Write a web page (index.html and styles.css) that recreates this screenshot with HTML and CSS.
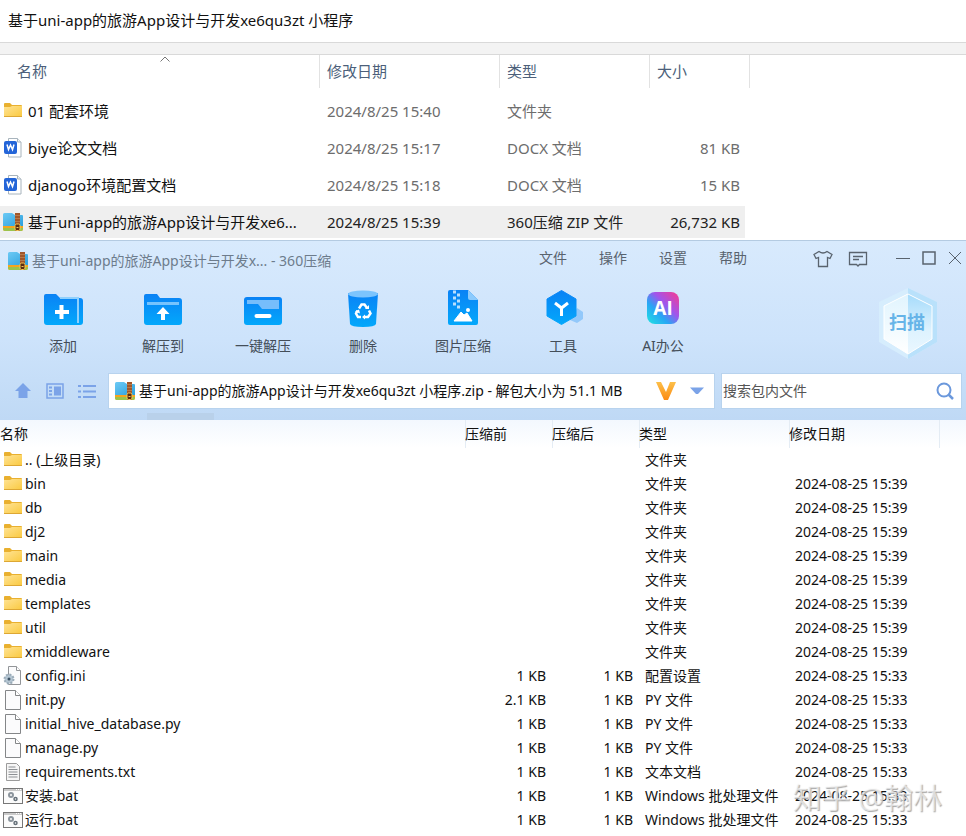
FILE: index.html
```
<!DOCTYPE html>
<html lang="zh-CN">
<head>
  <meta charset="UTF-8">
  <meta name="viewport" content="width=device-width, initial-scale=1">
  <title>360压缩</title>
  <link rel="stylesheet" href="styles.css">
</head>
<body>

  <!-- SHARED ICONS -->
  <svg class="defs" width="0" height="0" aria-hidden="true">
    <defs>
      <linearGradient id="gFolder" x1="0" y1="0" x2="1" y2="1">
        <stop offset="0" stop-color="#ffe394"/><stop offset="1" stop-color="#fac93f"/>
      </linearGradient>
      <linearGradient id="gBlue" x1="0" y1="0" x2="0" y2="1">
        <stop offset="0" stop-color="#0a82f5"/><stop offset="1" stop-color="#03a8fb"/>
      </linearGradient>
      <linearGradient id="gZip" x1="0" y1="0" x2="1" y2="1">
        <stop offset="0" stop-color="#6dcaf5"/><stop offset="1" stop-color="#2b9fdc"/>
      </linearGradient>
      <linearGradient id="gV" x1="0" y1="0" x2="0" y2="1">
        <stop offset="0" stop-color="#fdc04a"/><stop offset="1" stop-color="#fb8a12"/>
      </linearGradient>
      <linearGradient id="gAi" x1="0" y1="1" x2="1" y2="0">
        <stop offset="0" stop-color="#20e5e0"/><stop offset=".35" stop-color="#29a5f5"/>
        <stop offset=".6" stop-color="#a055ec"/><stop offset="1" stop-color="#fb3a8c"/>
      </linearGradient>
      <linearGradient id="gHexL" x1="0" y1="0" x2="0" y2="1">
        <stop offset="0" stop-color="#e0f4fe"/><stop offset="1" stop-color="#ffffff"/>
      </linearGradient>
      <linearGradient id="gHexR" x1="0" y1="0" x2="0" y2="1">
        <stop offset="0" stop-color="#a5dbfb"/><stop offset=".6" stop-color="#ddf2fe"/><stop offset="1" stop-color="#eaf7ff"/>
      </linearGradient>
    </defs>
    <symbol id="folder" viewBox="0 0 20 18">
      <path d="M1 2q0-1 1-1h5l2 2h9q1 0 1 1v3H1z" fill="#e9b02f"/>
      <path d="M1 5h6l2-1h10v10q0 1-1 1H2q-1 0-1-1z" fill="url(#gFolder)"/>
      <path d="M1 14.500h18" stroke="#dda734"/>
    </symbol>
    <symbol id="docx" viewBox="0 0 20 20">
      <path d="M5.500.5h9l3.500 3.500v15H5.500z" fill="#fff" stroke="#a8b4bd"/>
      <path d="M14.500.5v3.500H18" fill="#eef2f5" stroke="#a8b4bd"/>
      <rect x="1" y="3" width="13" height="13" rx="2" fill="#2465d8"/>
      <path d="M4 6.500l1.500 5L7.500 7l2 4.500 1.500-5" fill="none" stroke="#fff" stroke-width="1.500"/>
    </symbol>
    <symbol id="zip" viewBox="0 0 20 20">
      <path d="M0 2.500Q0 1 1.500 1H9l3 2h7q1 0 1 1v10H0z" fill="url(#gZip)"/>
      <path d="M0 14h20v3q0 2-2 2H2q-2 0-2-2z" fill="#f4a51e"/>
      <path d="M0 16h20v1q0 2-2 2H2q-2 0-2-2z" fill="#9cc34b"/>
      <rect x="12" y="1" width="5" height="18" fill="#a0562a"/>
      <path d="M12 3.500h5M12 6.500h5M12 9.500h5" stroke="#b87a4a"/>
      <rect x="12" y="12" width="5" height="6.500" rx="1.500" fill="#5d2c10" stroke="#f6cb55"/>
      <path d="M13.500 15.500h2" stroke="#f6cb55"/>
    </symbol>
    <symbol id="file" viewBox="0 0 20 20">
      <path d="M2.500.5h10l5 5v14h-15z" fill="#fbfbfc" stroke="#848688"/>
      <path d="M12.500.5v5h5" fill="#fff" stroke="#848688"/>
    </symbol>
    <symbol id="text" viewBox="0 0 20 20">
      <path d="M3.500 1.500h10l3 3v14h-13z" fill="#f6f6f6" stroke="#9b9b9b"/>
      <path d="M5.500 5h7M5.500 7.500h9M5.500 10h9M5.500 12.500h9M5.500 15h9" stroke="#8d9094"/>
    </symbol>
    <symbol id="ini" viewBox="0 0 20 20">
      <path d="M5.500.5h8l4 4v14h-12z" fill="#fbfbfc" stroke="#929598"/>
      <path d="M13.500.5v4h4" fill="#fff" stroke="#929598"/>
      <circle cx="6" cy="13" r="4.500" fill="#b4c5d2" stroke="#9aabb8" stroke-width="2" stroke-dasharray="2 1.500"/>
      <circle cx="6" cy="13" r="1.500" fill="#405566"/>
    </symbol>
    <symbol id="bat" viewBox="0 0 20 18">
      <rect x=".5" y="1.500" width="19" height="15" fill="#fbfbfb" stroke="#777"/>
      <path d="M1 3h18" stroke="#999"/>
      <path d="M13 2.500h1M15 2.500h1M17 2.500h1" stroke="#fff"/>
      <circle cx="8" cy="8" r="2" fill="none" stroke="#8c959d" stroke-width="2"/>
      <circle cx="12.500" cy="12" r="1.500" fill="none" stroke="#66717a" stroke-width="1.500"/>
    </symbol>
  </svg>

  <!-- EXPLORER -->
  <header class="path">基于uni-app的旅游App设计与开发xe6qu3zt 小程序</header>
  <div class="strip"></div>
  <table class="explorer">
    <colgroup><col class="c-name"><col class="c-date"><col class="c-type"><col class="c-size"><col></colgroup>
    <thead>
      <tr>
        <th>名称<svg class="sort" viewBox="0 0 10 6"><path d="M.5 5.500L5 1l4.500 4.500" fill="none" stroke="#777"/></svg></th>
        <th>修改日期</th><th>类型</th><th>大小</th><td></td>
      </tr>
    </thead>
    <tbody>
      <tr><td><div class="name"><svg><use href="#folder"/></svg><span>01 配套环境</span></div></td><td>2024/8/25 15:40</td><td>文件夹</td><td></td><td></td></tr>
      <tr><td><div class="name"><svg><use href="#docx"/></svg><span>biye论文文档</span></div></td><td>2024/8/25 15:17</td><td>DOCX 文档</td><td>81 KB</td><td></td></tr>
      <tr><td><div class="name"><svg><use href="#docx"/></svg><span>djanogo环境配置文档</span></div></td><td>2024/8/25 15:18</td><td>DOCX 文档</td><td>15 KB</td><td></td></tr>
      <tr class="selected"><td><div class="name"><svg><use href="#zip"/></svg><span>基于uni-app的旅游App设计与开发xe6...</span></div></td><td>2024/8/25 15:39</td><td>360压缩 ZIP 文件</td><td>26,732 KB</td><td></td></tr>
    </tbody>
  </table>

  <!-- ARCHIVER WINDOW -->
  <main class="archiver">
    <div class="chrome">
      <div class="titlebar">
        <svg class="app-icon"><use href="#zip"/></svg>
        <h1>基于uni-app的旅游App设计与开发x... - 360压缩</h1>
        <nav class="menu">
          <button type="button">文件</button>
          <button type="button">操作</button>
          <button type="button">设置</button>
          <button type="button">帮助</button>
        </nav>
        <div class="window-tools">
          <button type="button" aria-label="皮肤"><svg width="20" height="18" viewBox="0 0 20 18"><path d="M6 1.500q4 3 8 0l5 3-2 4-2.500-1v9h-9v-9L3 8.500l-2-4z" fill="none" stroke="#59636e" stroke-width="1.300"/></svg></button>
          <button type="button" aria-label="反馈"><svg width="20" height="18" viewBox="0 0 20 18"><path d="M1.500 2.500h17v12h-7L10 16l-1.500-1.500h-7zM5 6.500h10M5 9.500h6" fill="none" stroke="#59636e" stroke-width="1.300"/></svg></button>
        </div>
        <div class="window-buttons">
          <button type="button" aria-label="最小化"><svg width="14" height="14" viewBox="0 0 14 14"><path d="M0 7.500h14" stroke="#59636e"/></svg></button>
          <button type="button" aria-label="最大化"><svg width="14" height="14" viewBox="0 0 14 14"><rect x="1" y="1" width="12" height="12" fill="none" stroke="#59636e" stroke-width="1.500"/></svg></button>
          <button type="button" aria-label="关闭"><svg width="14" height="14" viewBox="0 0 14 14"><path d="M1 1l12 12M13 1L1 13" stroke="#59636e"/></svg></button>
        </div>
      </div>

      <div class="toolbar">
        <button type="button"><svg viewBox="0 0 40 40">
          <path d="M1 6q0-2 2-2h10l4 4h20q3 0 3 3v21q0 3-3 3H4q-3 0-3-3z" fill="url(#gBlue)"/>
          <path d="M17 8h18v25" fill="none" stroke="#8fd0fd" stroke-width="2"/>
          <path d="M18.500 15v14M12 22h14" stroke="#fff" stroke-width="4"/></svg>添加</button>
        <button type="button"><svg viewBox="0 0 40 40">
          <path d="M1 6q0-2 2-2h11l3 4h19q3 0 3 3v21q0 3-3 3H4q-3 0-3-3z" fill="url(#gBlue)"/>
          <path d="M4 13.500h32" stroke="#76c3fd" stroke-width="3"/>
          <path d="M20 17l6.500 7H22v6h-4v-6h-4.500z" fill="#fff"/></svg>解压到</button>
        <button type="button"><svg viewBox="0 0 40 40">
          <rect x="1" y="7" width="38" height="28" rx="3" fill="url(#gBlue)"/>
          <path d="M4 10h32v9H19l-4-5H4z" fill="#76bdfb"/>
          <path d="M13.500 26h13" stroke="#fff" stroke-width="4" stroke-linecap="round"/></svg>一键解压</button>
        <button type="button"><svg viewBox="0 0 40 40">
          <path d="M5 3h30l-2 31q-1 3-13 3T7 34z" fill="url(#gBlue)"/>
          <ellipse cx="20" cy="4" rx="15" ry="3.500" fill="#7cc4fd"/>
          <path d="M16 18.500l2.500-4h3l2.500 3.500M26 20.500l1.500 3-2.500 3.500h-3.500M18 27h-3l-2-3.500 1.500-3" fill="none" stroke="#fff" stroke-width="2.500"/>
          <path d="M26 15v4h-4zM22 24.500v5l-3-2.500zM12 21.500l4-2 1 4z" fill="#fff"/></svg>删除</button>
        <button type="button"><svg viewBox="0 0 40 40">
          <path d="M5 2q0-2 2-2h18l10 10v23q0 2-2 2H7q-2 0-2-2z" fill="url(#gBlue)"/>
          <path d="M25 0l10 10H27q-2 0-2-2z" fill="#8bcafd"/>
          <path d="M10 2h3M14 5h3M10 8h3M14 11h3M10 14h3M14 17h3" stroke="#b9dffe" stroke-width="3"/>
          <path d="M11 31l7-9 3 3 3-2 5 8z" fill="#fff" stroke="#fff" stroke-linejoin="round"/>
          <circle cx="25" cy="20" r="2" fill="#fff"/></svg>图片压缩</button>
        <button type="button"><svg viewBox="0 0 40 40">
          <path d="M34 18l6 4v7l-6 4-7-3z" fill="#92c8fa"/>
          <path d="M18.500 0.500L33 9v17L18.500 34.500 4 26V9z" fill="url(#gBlue)" stroke="url(#gBlue)" stroke-linejoin="round"/>
          <path d="M12 13l6.500 5 6.500-5M18.500 18v8" fill="none" stroke="#fff" stroke-width="3"/></svg>工具</button>
        <button type="button"><svg viewBox="0 0 40 40">
          <rect x="4" y="2" width="32" height="32" rx="8" fill="url(#gAi)"/>
          <text class="ai-text" x="20" y="25">AI</text></svg>AI办公</button>
        <button type="button" class="scan" aria-label="扫描"><svg viewBox="0 0 64 76">
          <path d="M32 3L3 17v40l29 17 29-17V17z" fill="#d6edfd"/>
          <path d="M32 3v71l29-17V17z" fill="#b9e1fb"/>
          <path d="M32 9L8 21v33l24 15z" fill="url(#gHexL)"/>
          <path d="M32 9l24 12v33L32 69z" fill="url(#gHexR)"/>
          <path d="M32 9L8 21v33l24 15 24-15V21z" fill="none" stroke="#fff"/>
          <text class="scan-text" x="31" y="44">扫描</text></svg></button>
      </div>

      <div class="address-row">
        <div class="nav-buttons">
          <button type="button" aria-label="上级目录"><svg width="18" height="18" viewBox="0 0 18 18"><path d="M9 1l8 8h-3.500v7h-9V9H1z" fill="#7ba3e8"/></svg></button>
          <button type="button" aria-label="预览"><svg width="18" height="18" viewBox="0 0 18 18"><path d="M1 2h16v14H1z" fill="none" stroke="#7ba3e8" stroke-width="1.500"/><path d="M8 4.500h7v9H8zM3 4.500h3v2H3zM3 8h3v2H3zM3 11.500h3v2H3z" fill="#7ba3e8"/></svg></button>
          <button type="button" aria-label="列表"><svg width="18" height="18" viewBox="0 0 18 18"><path d="M0 4h3M5 4h13M0 9.500h3M5 9.500h13M0 15h3M5 15h13" stroke="#7ba3e8" stroke-width="2"/></svg></button>
        </div>
        <div class="address">
          <svg class="app-icon"><use href="#zip"/></svg>
          <input type="text" aria-label="地址" value="基于uni-app的旅游App设计与开发xe6qu3zt 小程序.zip - 解包大小为 51.1 MB">
          <svg width="20" height="20" viewBox="0 0 20 20"><path d="M0 1h5l5 10 4-10h6l-8 18H8z" fill="url(#gV)"/></svg>
          <button type="button" aria-label="展开"><svg width="14" height="8" viewBox="0 0 14 8"><path d="M0 .5h14L8 7H6z" fill="#7ba3e8"/></svg></button>
        </div>
        <div class="search">
          <input type="text" aria-label="搜索" placeholder="搜索包内文件">
          <button type="button" aria-label="搜索"><svg width="18" height="18" viewBox="0 0 18 18"><circle cx="8" cy="8" r="6.500" fill="none" stroke="#6b98dc" stroke-width="2"/><path d="M12.500 12.500L17 17" stroke="#6b98dc" stroke-width="2.500"/></svg></button>
        </div>
      </div>
      <div class="thumb"></div>
    </div>

    <table class="archive">
      <colgroup><col><col class="c-pack"><col class="c-pack"><col class="c-kind"><col class="c-kind"><col class="c-end"></colgroup>
      <thead>
        <tr><th>名称</th><th>压缩前</th><th>压缩后</th><th>类型</th><th>修改日期</th><th></th></tr>
      </thead>
      <tbody id="files"></tbody>
    </table>
  </main>

  <div class="watermark">知乎 @翰林</div>

  <script>
    // icon, name, size before, size after, type, modified
    const files = [
      ["folder", ".. (上级目录)", "", "", "文件夹", ""],
      ["folder", "bin", "", "", "文件夹", "2024-08-25 15:39"],
      ["folder", "db", "", "", "文件夹", "2024-08-25 15:39"],
      ["folder", "dj2", "", "", "文件夹", "2024-08-25 15:39"],
      ["folder", "main", "", "", "文件夹", "2024-08-25 15:39"],
      ["folder", "media", "", "", "文件夹", "2024-08-25 15:39"],
      ["folder", "templates", "", "", "文件夹", "2024-08-25 15:39"],
      ["folder", "util", "", "", "文件夹", "2024-08-25 15:39"],
      ["folder", "xmiddleware", "", "", "文件夹", "2024-08-25 15:39"],
      ["ini", "config.ini", "1 KB", "1 KB", "配置设置", "2024-08-25 15:33"],
      ["file", "init.py", "2.1 KB", "1 KB", "PY 文件", "2024-08-25 15:33"],
      ["file", "initial_hive_database.py", "1 KB", "1 KB", "PY 文件", "2024-08-25 15:33"],
      ["file", "manage.py", "1 KB", "1 KB", "PY 文件", "2024-08-25 15:33"],
      ["text", "requirements.txt", "1 KB", "1 KB", "文本文档", "2024-08-25 15:33"],
      ["bat", "安装.bat", "1 KB", "1 KB", "Windows 批处理文件", "2024-08-25 15:33"],
      ["bat", "运行.bat", "1 KB", "1 KB", "Windows 批处理文件", "2024-08-25 15:33"]
    ];

    const tbody = document.getElementById("files");
    files.forEach(([icon, name, before, after, type, date]) => {
      const tr = document.createElement("tr");
      tr.innerHTML = `
        <td><div class="name"><svg><use href="#${icon}"/></svg><span>${name}</span></div></td>
        <td>${before}</td>
        <td>${after}</td>
        <td>${type}</td>
        <td>${date}</td>
        <td></td>
      `;
      tbody.appendChild(tr);
    });
  </script>
</body>
</html>
```
FILE: styles.css
```
* { box-sizing: border-box; }
body {
  position: relative;
  margin: 0;
  background: #fff;
  color: #111;
  font-family: "Noto Sans", "Noto Sans CJK SC", sans-serif;
  font-size: 14px;
  line-height: 20px;
}
.defs { position: absolute; }
button {
  display: flex;
  align-items: center;
  justify-content: center;
  padding: 0;
  border: none;
  background: none;
  color: inherit;
  font: inherit;
  cursor: pointer;
}
input {
  flex: 1;
  min-width: 0;
  padding: 0;
  border: none;
  outline: none;
  background: none;
  color: #111;
  font: inherit;
}
input::placeholder { color: #555; opacity: 1; }
svg { flex-shrink: 0; }
table {
  width: 100%;
  table-layout: fixed;
  border-collapse: separate;
  border-spacing: 0;
}
th, td {
  padding: 0;
  font-weight: normal;
  text-align: left;
  white-space: nowrap;
}
.name { display: flex; align-items: center; }
.name svg { width: 20px; height: 20px; }

/* explorer */
.path {
  height: 42px;
  padding: 0 8px;
  font-size: 15px;
  line-height: 40px;
}
.strip {
  height: 13px;
  background: #f3f3f3;
  border-top: 1px solid #d9d9d9;
  border-bottom: 1px solid #d9d9d9;
}
.explorer { font-size: 15px; color: #6d6d6d; }
.c-name { width: 320px; }
.c-date { width: 180px; }
.c-type { width: 150px; }
.c-size { width: 100px; }
.explorer th {
  position: relative;
  height: 33px;
  padding: 0 0 2px 7px;
  border-right: 1px solid #e2e2e2;
  color: #4c5f7a;
}
.explorer th:first-child { padding-left: 17px; }
.sort {
  position: absolute;
  top: 1px;
  left: 50%;
  width: 10px;
  height: 6px;
}
.explorer tbody::before {
  content: "";
  display: block;
  height: 5px;
}
.explorer tbody td { height: 37px; padding: 0 0 2px 7px; }
.explorer tbody td:first-child { padding-left: 3px; }
.explorer tbody td:nth-child(4) { padding-right: 10px; text-align: right; }
.explorer .name { gap: 5px; color: #111; }
.selected { background: linear-gradient(#efefef, #efefef) no-repeat 0 2px / 745px 32px; color: #222; }

/* archiver window */
.chrome {
  display: flex;
  flex-direction: column;
  height: 180px;
  margin-top: -1px;
  border-top: 1px solid #b4cbe2;
  background: linear-gradient(#d8eafd, #cde3fb 55%, #bfd9f5);
}
.titlebar {
  display: flex;
  align-items: center;
  height: 40px;
  padding: 0 4px 0 8px;
  color: #59636e;
}
.app-icon { width: 20px; height: 20px; }
h1 {
  flex: 1;
  margin: 0 0 0 4px;
  font-size: 14px;
  font-weight: normal;
  color: #6d7c8c;
}
.menu { display: flex; gap: 32px; height: 34px; align-self: flex-start; }
.window-tools { display: flex; gap: 15px; margin-left: 66px; height: 36px; align-self: flex-start; }
.window-buttons { display: flex; gap: 12px; margin-left: 28px; height: 34px; align-self: flex-start; }
.toolbar {
  display: flex;
  height: 88px;
  padding: 9px 26px 0 13px;
  color: #444e59;
}
.toolbar button {
  flex-direction: column;
  justify-content: flex-start;
  width: 100px;
  gap: 6px;
}
.toolbar svg { width: 40px; height: 40px; }
.ai-text { fill: #fff; font-family: "Open Sans", sans-serif; font-size: 19px; font-weight: bold; text-anchor: middle; }
.toolbar .scan { width: 64px; margin: -5px 0 0 auto; }
.toolbar .scan svg { width: 64px; height: 76px; }
.scan-text { fill: #66b4e8; font-size: 18px; font-weight: bold; text-anchor: middle; }
.address-row {
  display: flex;
  align-items: center;
  height: 45px;
  padding: 0 4px 0 14px;
}
.nav-buttons { display: flex; gap: 14px; margin-right: 12px; }
.address, .search {
  display: flex;
  align-items: center;
  height: 36px;
  background: #fff;
  border: 1px solid #b8d3ee;
}
.address { flex: 1; gap: 4px; padding: 0 10px 0 6px; margin-right: 6px; }
.address button { margin-left: 10px; }
.search { width: 241px; padding: 0 7px 0 1px; }
.thumb {
  width: 67px;
  height: 7px;
  margin-left: 147px;
  background: #b9d1ea;
}

/* archive listing */
.c-pack { width: 87px; }
.c-kind { width: 150px; }
.c-end { width: 27px; }
.archive th {
  height: 28px;
  background: linear-gradient(#f3f8fe, #fff);
  box-shadow: inset 1px 0 #e4ecf4;
}
.archive th:first-child { box-shadow: none; }
.archive tbody td { height: 24px; padding: 0 6px; }
.archive tbody td:first-child { padding: 0 0 0 3px; }
.archive tbody td:nth-child(2), .archive tbody td:nth-child(3) { text-align: right; }
.archive .name { gap: 2px; }

.watermark {
  position: absolute;
  right: 24px;
  bottom: 14px;
  color: rgba(255, 255, 255, 0.6);
  font-size: 29px;
  line-height: 40px;
  text-shadow: 1px 1px 1px #aaa;
}
```
